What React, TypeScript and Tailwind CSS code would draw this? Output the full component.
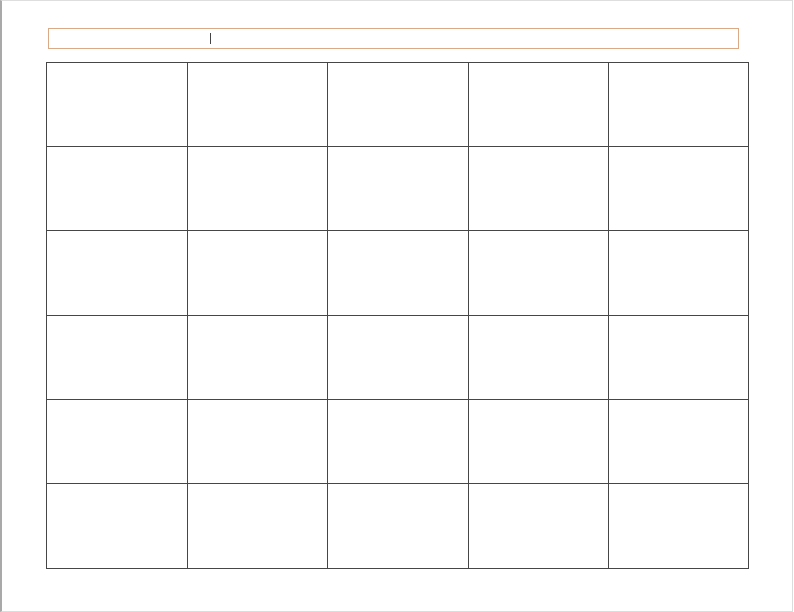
export default function App() {
  const cols = "140px 139px 140px 139px 139px";
  const rows = "83px 83px 84px 83px 83px 84px";
  return (
    <div className="w-[794px] h-[612px] bg-white overflow-hidden">
      <div className="w-[793px] h-[612px] border-l-2 border-l-[#a9a9a9] border-t border-t-[#dedede] border-r border-r-[#dcdcdc] border-b border-b-[#dcdcdc] pt-[27px] pl-[46px]" style={{ fontFamily: "'Liberation Sans', sans-serif" }}>
        <div className="w-[691px] h-[21px] border border-[#dba986] relative">
          <div className="absolute left-[161px] top-[4px] w-px h-[11px] bg-[#444]" />
        </div>
        <div
          className="mt-[13px] ml-[-2px] grid gap-px bg-[#464646] border border-[#464646] w-[703px]"
          style={{ gridTemplateColumns: cols, gridTemplateRows: rows }}
        >
          {Array.from({ length: 30 }).map((_, i) => (
            <div key={i} className="bg-white" />
          ))}
        </div>
      </div>
    </div>
  );
}
